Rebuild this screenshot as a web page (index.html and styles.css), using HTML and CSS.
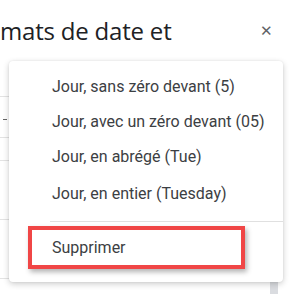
FILE: index.html
```html
<!DOCTYPE html>
<html lang="fr">
<head>
    <meta charset="UTF-8">
    <title>Formats de date et heure</title>
    <link rel="stylesheet" href="styles.css">
</head>
<body>
<div class="dialog">
    <div class="dialog-header">
        <h1 class="dialog-title">mats de date et</h1>
        <span class="close">&#x2715;</span>
    </div>
    <div class="rows">
        <div class="row"></div>
        <div class="row row-dash"><span class="dash"></span></div>
        <div class="row"></div>
        <div class="row"></div>
        <div class="row row-last"></div>
    </div>
    <div class="scroll-thumb"></div>
</div>

<!-- menu déroulant -->
<div class="menu">
    <div class="menu-item">Jour, sans zéro devant (5)</div>
    <div class="menu-item">Jour, avec un zéro devant (05)</div>
    <div class="menu-item">Jour, en abrégé (Tue)</div>
    <div class="menu-item">Jour, en entier (Tuesday)</div>
    <div class="menu-divider"></div>
    <div class="menu-item">Supprimer</div>
</div>
<div class="highlight"></div>
</body>
</html>
```

FILE: styles.css
```css
body {
    margin: 0;
    width: 300px;
    height: 294px;
    overflow: hidden;
    background: #fff;
    font-family: Roboto, "Liberation Sans", sans-serif;
    position: relative;
}
.dialog {
    position: relative;
    height: 294px;
    overflow: hidden;
}
.dialog-header {
    display: flex;
    align-items: center;
    justify-content: space-between;
    height: 61px;
    padding-right: 27px;
}
.dialog-title {
    margin: 0;
    font-family: "Open Sans", Roboto, sans-serif;
    font-weight: 400;
    font-size: 24px;
    color: #202124;
    letter-spacing: -0.2px;
}
.close {
    font-size: 15px;
    color: #5f6368;
}
.rows {
    padding-top: 35px;
    width: 265px;
}
.row {
    border-top: 1px solid #e3e3e3;
    height: 40px;
    position: relative;
}
.row:nth-child(2) {
    height: 22px;
}
.row:nth-child(3) {
    height: 58px;
}
.row:nth-child(4) {
    height: 58px;
}
.row-last {
    height: 10px;
}
.dash {
    position: absolute;
    left: 3px;
    top: -19px;
    width: 4px;
    border-top: 1px solid #666;
}
.scroll-thumb {
    position: absolute;
    left: 270px;
    top: 273px;
    width: 8px;
    height: 21px;
    border-radius: 4px 4px 0 0;
    background: #dadce0;
}
.menu {
    position: absolute;
    left: 9px;
    top: 61px;
    width: 274px;
    height: 221px;
    box-sizing: border-box;
    padding-top: 8px;
    background: #fff;
    border-radius: 4px;
    box-shadow: 0 2px 6px rgba(0, 0, 0, 0.2), 0 0 2px rgba(0, 0, 0, 0.08);
}
.menu-item {
    height: 35px;
    line-height: 35px;
    padding-left: 43px;
    font-size: 16px;
    color: #3c4043;
}
.menu-item:nth-child(4) {
    height: 37px;
    line-height: 40px;
}
.menu-divider {
    margin: 10px 0 8px 41px;
    border-top: 1px solid #e0e0e0;
}
.highlight {
    position: absolute;
    left: 28px;
    top: 226px;
    width: 209px;
    height: 35px;
    border: 4px solid #f04646;
    box-shadow: 2px 3px 5px rgba(0, 0, 0, 0.3);
}
```
